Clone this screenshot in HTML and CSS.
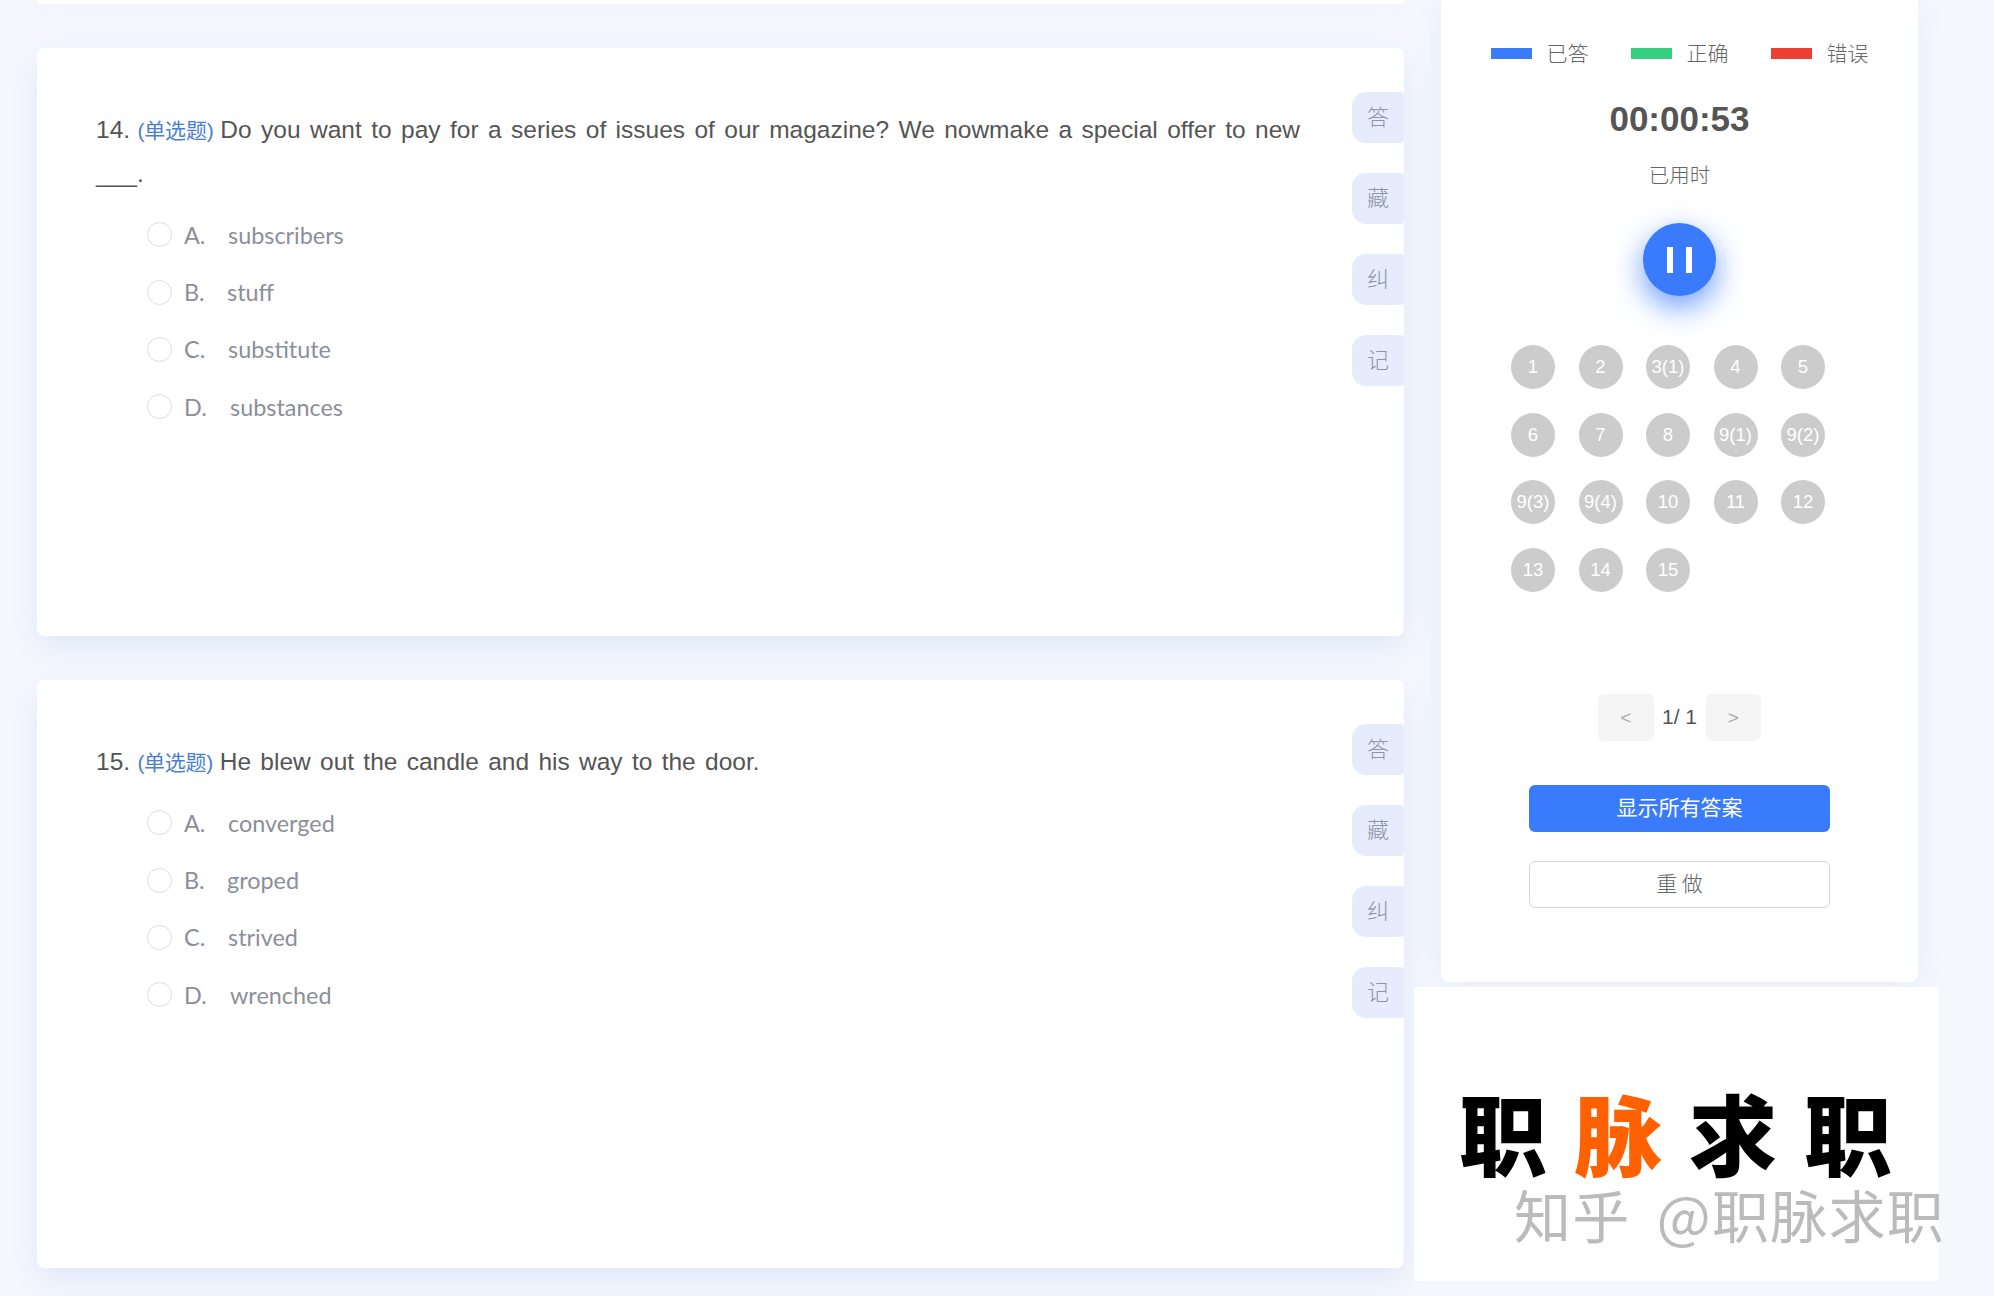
FILE: index.html
```html
<!DOCTYPE html>
<html lang="zh-CN">
<head>
<meta charset="utf-8">
<title>练习</title>
<link rel="stylesheet" href="styles.css">
</head>
<body>
<div class="page">
  <main class="questions">
    <div class="card card-stub"></div>

    <section class="card">
      <div class="card-body">
        <p class="stem"><span>14.</span> <span class="tag">(单选题)</span> Do you want to pay for a series of issues of our magazine? We nowmake a special offer to new ___.</p>
        <ul class="options">
          <li class="option"><span class="radio"></span><span class="letter">A.</span><span class="opt-a">subscribers</span></li>
          <li class="option"><span class="radio"></span><span class="letter">B.</span><span class="opt-b">stuff</span></li>
          <li class="option"><span class="radio"></span><span class="letter">C.</span><span class="opt-a">substitute</span></li>
          <li class="option"><span class="radio"></span><span class="letter">D.</span><span class="opt-d">substances</span></li>
        </ul>
      </div>
      <div class="tabs">
        <span class="tab">答</span><span class="tab">藏</span><span class="tab">纠</span><span class="tab">记</span>
      </div>
    </section>

    <section class="card">
      <div class="card-body">
        <p class="stem"><span>15.</span> <span class="tag">(单选题)</span> He blew out the candle and his way to the door.</p>
        <ul class="options">
          <li class="option"><span class="radio"></span><span class="letter">A.</span><span class="opt-a">converged</span></li>
          <li class="option"><span class="radio"></span><span class="letter">B.</span><span class="opt-b">groped</span></li>
          <li class="option"><span class="radio"></span><span class="letter">C.</span><span class="opt-a">strived</span></li>
          <li class="option"><span class="radio"></span><span class="letter">D.</span><span class="opt-d">wrenched</span></li>
        </ul>
      </div>
      <div class="tabs">
        <span class="tab">答</span><span class="tab">藏</span><span class="tab">纠</span><span class="tab">记</span>
      </div>
    </section>
  </main>

  <aside class="side">
    <div class="panel">
      <div class="legend">
        <div class="legend-item"><span class="swatch swatch-blue"></span><span class="legend-text">已答</span></div>
        <div class="legend-item"><span class="swatch swatch-green"></span><span class="legend-text">正确</span></div>
        <div class="legend-item"><span class="swatch swatch-red"></span><span class="legend-text">错误</span></div>
      </div>
      <div class="timer">00:00:53</div>
      <div class="timer-label">已用时</div>
      <button class="pause" type="button" aria-label="暂停"><span class="pause-bar"></span><span class="pause-bar"></span></button>
      <div class="numbers">
        <span class="num">1</span><span class="num">2</span><span class="num">3(1)</span><span class="num">4</span><span class="num">5</span>
        <span class="num">6</span><span class="num">7</span><span class="num">8</span><span class="num">9(1)</span><span class="num">9(2)</span>
        <span class="num">9(3)</span><span class="num">9(4)</span><span class="num">10</span><span class="num">11</span><span class="num">12</span>
        <span class="num">13</span><span class="num">14</span><span class="num">15</span>
      </div>
      <div class="pager">
        <span class="pager-btn">&lt;</span>
        <span class="pager-text">1/ 1</span>
        <span class="pager-btn">&gt;</span>
      </div>
      <button class="btn btn-primary" type="button">显示所有答案</button>
      <button class="btn btn-plain" type="button">重 做</button>
    </div>
    <div class="logo-box">
      <div class="logo"><span>职</span><span class="logo-accent">脉</span><span>求</span><span>职</span></div>
      <div class="watermark">知乎 @职脉求职</div>
    </div>
  </aside>
</div>
</body>
</html>
```

FILE: styles.css
```css
* { box-sizing: border-box; }

html, body {
  margin: 0;
  height: 1296px;
  overflow: hidden;
  background: #f5f7fd;
}

body {
  font-family: "Liberation Sans", "Noto Sans CJK SC", sans-serif;
  color: #555;
}

.page {
  display: flex;
  align-items: flex-start;
  padding-left: 37px;
}

/* question column */
.questions {
  width: 1367px;
  display: flex;
  flex-direction: column;
  gap: 44px;
}

.card {
  display: flex;
  height: 588px;
  background: #fff;
  border-radius: 8px;
  box-shadow: 0 12px 30px rgba(60, 120, 220, 0.11);
}

.card-stub {
  height: 4px;
  border-radius: 0 0 8px 8px;
}

.card-body {
  flex: 1;
  min-width: 0;
  padding: 60px 52px 0 59px;
}

.stem {
  margin: 0;
  font-size: 24.5px;
  line-height: 44px;
  word-spacing: 2.5px;
  text-align: justify;
  color: #555;
}

.tag {
  margin: 0 -2.5px 0 -2px;
  font-size: 21px;
  line-height: 1;
  font-weight: 400;
  letter-spacing: -0.3px;
  word-spacing: 0;
  color: #4a7ed2;
}

.options {
  list-style: none;
  margin: 10px 0 0;
  padding: 0 0 0 51px;
}

.option {
  display: flex;
  align-items: center;
  height: 57.4px;
  font-family: "Lato", sans-serif;
  font-size: 23.4px;
  color: #8b8f99;
}

.radio {
  width: 25px;
  height: 25px;
  margin-right: 12px;
  border: 1px solid #dcdfe6;
  border-radius: 50%;
  background: #fff;
}

.letter { width: 44px; }
.opt-b { margin-left: -1px; }
.opt-d { margin-left: 2px; }

.tabs {
  flex: none;
  width: 52px;
  padding-top: 44px;
  display: flex;
  flex-direction: column;
  gap: 30px;
}

.tab {
  height: 51px;
  padding-bottom: 5px;
  display: flex;
  align-items: center;
  justify-content: center;
  background: #e6ecfb;
  border-radius: 14px 4px 4px 14px;
  font-family: "Noto Sans CJK SC", sans-serif;
  font-weight: 300;
  font-size: 22px;
  color: #8e94a6;
}

/* side column */
.side {
  flex: none;
  width: 525px;
  margin-left: 10px;
  display: flex;
  flex-direction: column;
  gap: 5px;
}

.panel {
  width: 477px;
  height: 982px;
  margin-left: 27px;
  padding-top: 38px;
  display: flex;
  flex-direction: column;
  align-items: center;
  background: #fff;
  border-radius: 0 0 8px 8px;
  box-shadow: 0 4px 30px rgba(60, 120, 220, 0.09);
}

.legend {
  display: flex;
  gap: 42px;
  height: 30px;
}

.legend-item {
  display: flex;
  align-items: center;
  gap: 15px;
  font-family: "Noto Sans CJK SC", sans-serif;
  font-weight: 300;
  font-size: 21px;
  color: #666;
}

.legend-text { margin-top: -3px; }

.swatch {
  width: 41px;
  height: 11px;
}
.swatch-blue { background: #3a7bfd; }
.swatch-green { background: #34d07f; }
.swatch-red { background: #ee3f35; }

.timer {
  margin-top: 31px;
  font-size: 35px;
  line-height: 40px;
  font-weight: 700;
  color: #555;
}

.timer-label {
  margin-top: 20px;
  font-family: "Noto Sans CJK SC", sans-serif;
  font-weight: 300;
  font-size: 20.5px;
  line-height: 30px;
  color: #666;
}

.pause {
  width: 73px;
  height: 73px;
  margin-top: 34px;
  padding: 0;
  display: flex;
  align-items: center;
  justify-content: center;
  gap: 13px;
  border: 0;
  border-radius: 50%;
  background: #3a7bfd;
  box-shadow: 0 11px 30px rgba(58, 123, 253, 0.75);
}

.pause-bar {
  width: 6px;
  height: 26px;
  background: #fff;
}

.numbers {
  width: 337px;
  height: 247px;
  margin-top: 49px;
  display: grid;
  grid-template-columns: repeat(5, 44px);
  grid-auto-rows: 44px;
  gap: 23.7px 23.5px;
  align-content: start;
}

.num {
  display: flex;
  align-items: center;
  justify-content: center;
  border-radius: 50%;
  background: #ccc;
  color: #fff;
  font-size: 18.5px;
  white-space: nowrap;
}

.pager {
  margin-top: 102px;
  display: flex;
  align-items: center;
}

.pager-btn {
  width: 55.5px;
  height: 47px;
  display: flex;
  align-items: center;
  justify-content: center;
  background: #f5f5f5;
  border-radius: 6px;
  color: #aaa;
  font-size: 19px;
}

.pager-text {
  width: 52px;
  padding-bottom: 2px;
  text-align: center;
  font-size: 21px;
  color: #555;
  white-space: nowrap;
}

.btn {
  width: 301px;
  height: 47px;
  padding: 0 0 6px;
  border-radius: 6px;
  font-family: "Noto Sans CJK SC", sans-serif;
  font-weight: 300;
  font-size: 21px;
}

.btn-primary {
  margin-top: 44px;
  border: 0;
  background: #3a7bfd;
  color: #fff;
  font-weight: 400;
}

.btn-plain {
  margin-top: 29px;
  border: 1px solid #d5d5d5;
  background: #fff;
  color: #666;
}

.logo-box {
  position: relative;
  height: 294px;
  padding: 102px 0 0 45px;
  background: #fff;
}

.logo {
  display: flex;
  gap: 27px;
  font-family: "Noto Sans CJK SC", sans-serif;
  font-weight: 900;
  font-size: 88px;
  line-height: 84px;
  color: #000;
}

.logo-accent { color: #ff6000; }

.watermark {
  position: absolute;
  left: 100px;
  top: 198px;
  font-family: "Noto Sans CJK SC", sans-serif;
  font-weight: 400;
  font-size: 57px;
  line-height: 56px;
  letter-spacing: 1.3px;
  word-spacing: 12px;
  white-space: nowrap;
  color: #bbb;
}
```
